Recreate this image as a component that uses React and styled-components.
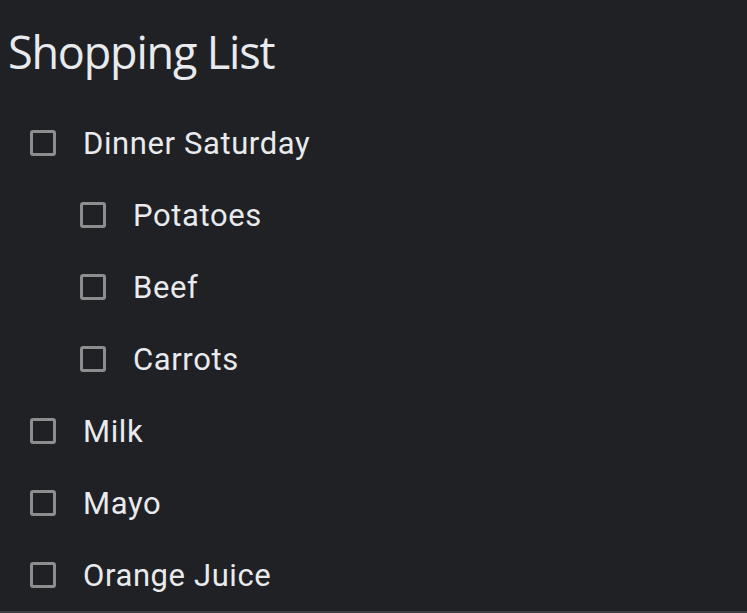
import React from "react";
import styled, { createGlobalStyle } from "styled-components";

const GlobalStyle = createGlobalStyle`
  html, body {
    margin: 0;
    background: #202124;
  }
`;

const Page = styled.div`
  background: #202124;
  padding-left: 8px;
  border-bottom: 2px solid #3c4043;
  font-family: Roboto, "Liberation Sans", sans-serif;
`;

const Title = styled.h1`
  margin: 0;
  padding-top: 24px;
  font-family: "Open Sans", "Liberation Sans", sans-serif;
  font-size: 45px;
  font-weight: 400;
  letter-spacing: -1.2px;
  line-height: 56px;
  color: #e8eaed;
  margin-bottom: 27px;
`;

const List = styled.ul`
  list-style: none;
  margin: 0;
  padding: 0;
`;

const Row = styled.li`
  display: flex;
  align-items: center;
  height: 72px;
  padding-left: ${(p) => (p.$nested ? 72 : 22)}px;
`;

const Box = styled.span`
  box-sizing: border-box;
  width: 26px;
  height: 26px;
  border: 3px solid #8c8d8f;
  border-radius: 3px;
  flex-shrink: 0;
  margin-right: 27px;
`;

const Label = styled.span`
  font-size: 31px;
  letter-spacing: 0.6px;
  color: #e8eaed;
`;

const items = [
  { name: "Dinner Saturday" },
  { name: "Potatoes", nested: true },
  { name: "Beef", nested: true },
  { name: "Carrots", nested: true },
  { name: "Milk" },
  { name: "Mayo" },
  { name: "Orange Juice" },
];

const App = () => {
  return (
    <>
      <GlobalStyle />
      <Page>
        <Title>Shopping List</Title>
        <List>
          {items.map((item) => (
            <Row key={item.name} $nested={item.nested}>
              <Box />
              <Label>{item.name}</Label>
            </Row>
          ))}
        </List>
      </Page>
    </>
  );
};

export default App;
